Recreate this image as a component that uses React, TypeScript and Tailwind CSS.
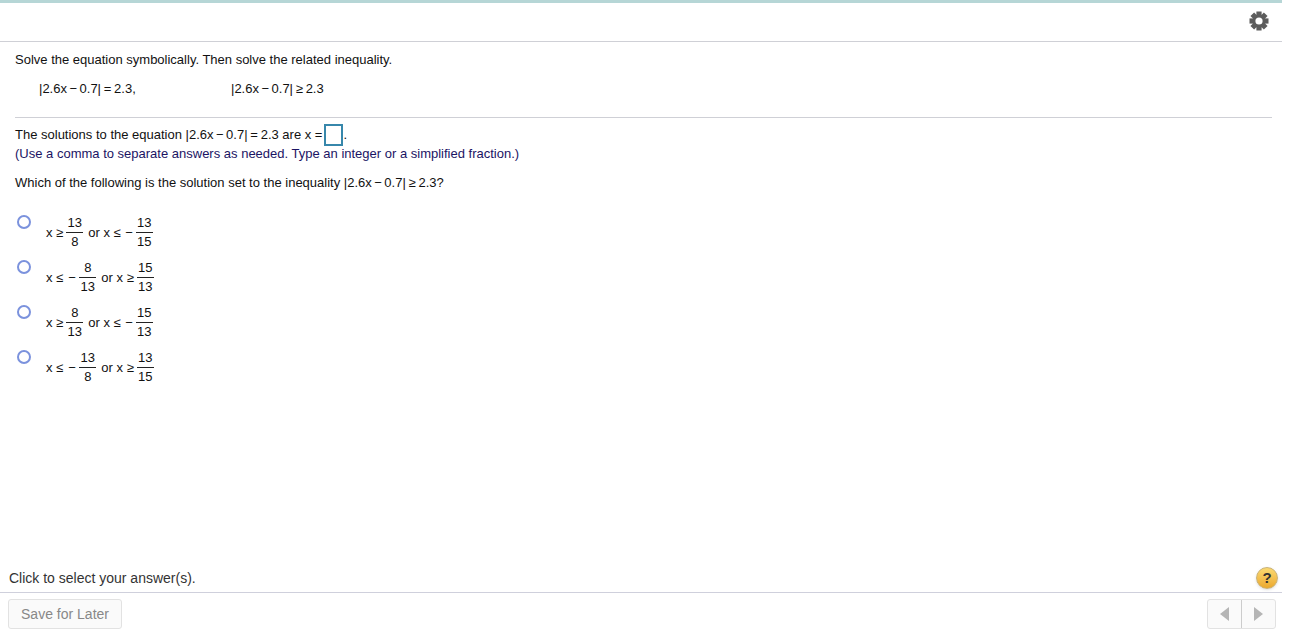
const font = "font-['Liberation_Sans',Arial,sans-serif]";

function Eq({ op, value }: { op: string; value: string }) {
  return (
    <span className="whitespace-nowrap">
      |2.6x<span className="mx-[2.5px]">−</span>0.7|<span className="mx-[2.75px]">{op}</span>{value}
    </span>
  );
}

function Frac({ top, bottom }: { top: string; bottom: string }) {
  return (
    <span className="flex flex-col items-center w-[17px] ml-[3px]">
      <span className="h-[18px] leading-[15px] border-b border-[#222] w-full text-center">{top}</span>
      <span className="h-[17px] leading-[15px] pt-[1px]">{bottom}</span>
    </span>
  );
}

const options = [
  { a: 'x ≥', an: '', at: '13', ab: '8', b: 'or x ≤', bn: '−', bt: '13', bb: '15' },
  { a: 'x ≤', an: '−', at: '8', ab: '13', b: 'or x ≥', bn: '', bt: '15', bb: '13' },
  { a: 'x ≥', an: '', at: '8', ab: '13', b: 'or x ≤', bn: '−', bt: '15', bb: '13' },
  { a: 'x ≤', an: '−', at: '13', ab: '8', b: 'or x ≥', bn: '', bt: '13', bb: '15' },
];

function Option({ o }: { o: (typeof options)[number] }) {
  return (
    <div className="flex h-[45px]">
      <span className="w-[14px] h-[14px] rounded-full border-2 border-[#7b92dd] bg-white shrink-0" />
      <div className="ml-[15px] flex items-center h-[35px]">
        <span className="whitespace-nowrap">{o.a}</span>
        {o.an && <span className="ml-[5px] mr-[0.5px]">{o.an}</span>}
        <Frac top={o.at} bottom={o.ab} />
        <span className="ml-[5px] whitespace-nowrap">{o.b}</span>
        {o.bn && <span className="ml-[4.5px]">{o.bn}</span>}
        <Frac top={o.bt} bottom={o.bb} />
      </div>
    </div>
  );
}

function Gear() {
  return (
    <svg viewBox="0 0 20 20" className="w-[20px] h-[20px]" fill="#5c5c5c">
      {[0, 45, 90, 135].map((r) => (
        <rect key={r} x="7.4" y="0.5" width="5.2" height="19" transform={`rotate(${r} 10 10)`} />
      ))}
      <circle cx="10" cy="10" r="6.6" />
      <circle cx="10" cy="10" r="3.6" fill="#fff" />
    </svg>
  );
}

export default function App() {
  return (
    <div className={`${font} w-[1282px] h-[635px] bg-white flex flex-col overflow-hidden text-[13px] text-[#111]`}>
      <div className="h-[3px] bg-[#b6d6d6] shrink-0" />
      <div className="h-[39px] shrink-0 border-b border-[#cfd0d6] flex items-center justify-end pr-[13px] pb-[2px]">
        <Gear />
      </div>

      <div className="flex-1 pl-[15px] pr-[10px]">
        <div className="h-[76px] pt-[10px] border-b border-[#cfd0d6]">
          <p className="leading-[15px]">Solve the equation symbolically. Then solve the related inequality.</p>
          <div className="flex mt-[14px] pl-[24px] leading-[15px]">
            <div className="w-[192px]"><Eq op="=" value="2.3," /></div>
            <Eq op="≥" value="2.3" />
          </div>
        </div>

        <div className="flex items-start h-[22px] mt-[6px]">
          <span className="mt-[3px] leading-[15px]">The solutions to the equation <Eq op="=" value="2.3" /> are x =</span>
          <span className="ml-[2px] w-[19px] h-[22px] border-2 border-[#3787ab] bg-white shrink-0" />
          <span className="mt-[3px] leading-[15px]">.</span>
        </div>
        <p className="leading-[15px] text-[#1b1464]">(Use a comma to separate answers as needed. Type an integer or a simplified fraction.)</p>
        <p className="mt-[14px] leading-[15px]">Which of the following is the solution set to the inequality <Eq op="≥" value="2.3?" /></p>

        <div className="mt-[25px] ml-[2px]">
          {options.map((o, i) => (
            <Option key={i} o={o} />
          ))}
        </div>
      </div>

      <div className="h-[30px] shrink-0 border-b border-[#cfd0dc] flex items-center justify-between pl-[9px] pr-[4px] pt-[1px]">
        <span className="text-[14px] text-[#333]">Click to select your answer(s).</span>
        <span className="w-[22px] h-[22px] rounded-full bg-gradient-to-b from-[#fbd970] to-[#eba92c] border border-[#c9b277] shadow-sm flex items-center justify-center text-[15px] font-bold text-[#333]">?</span>
      </div>

      <div className="h-[42px] shrink-0 flex items-start justify-between pt-[6px] pl-[8px] pr-[6px]">
        <button className="w-[114px] h-[30px] rounded-[3px] border border-[#e2e2e2] bg-[#fafafa] text-[14px] text-[#888]">Save for Later</button>
        <div className="flex h-[30px] w-[69px] rounded-[3px] border border-[#e2e2e2] bg-[#fafafa]">
          <div className="flex-1 border-r border-[#ccc] flex items-center justify-center">
            <span className="w-0 h-0 border-y-[7px] border-y-transparent border-r-[9px] border-r-[#b5b5b5]" />
          </div>
          <div className="flex-1 flex items-center justify-center">
            <span className="w-0 h-0 border-y-[7px] border-y-transparent border-l-[9px] border-l-[#b5b5b5]" />
          </div>
        </div>
      </div>
    </div>
  );
}
